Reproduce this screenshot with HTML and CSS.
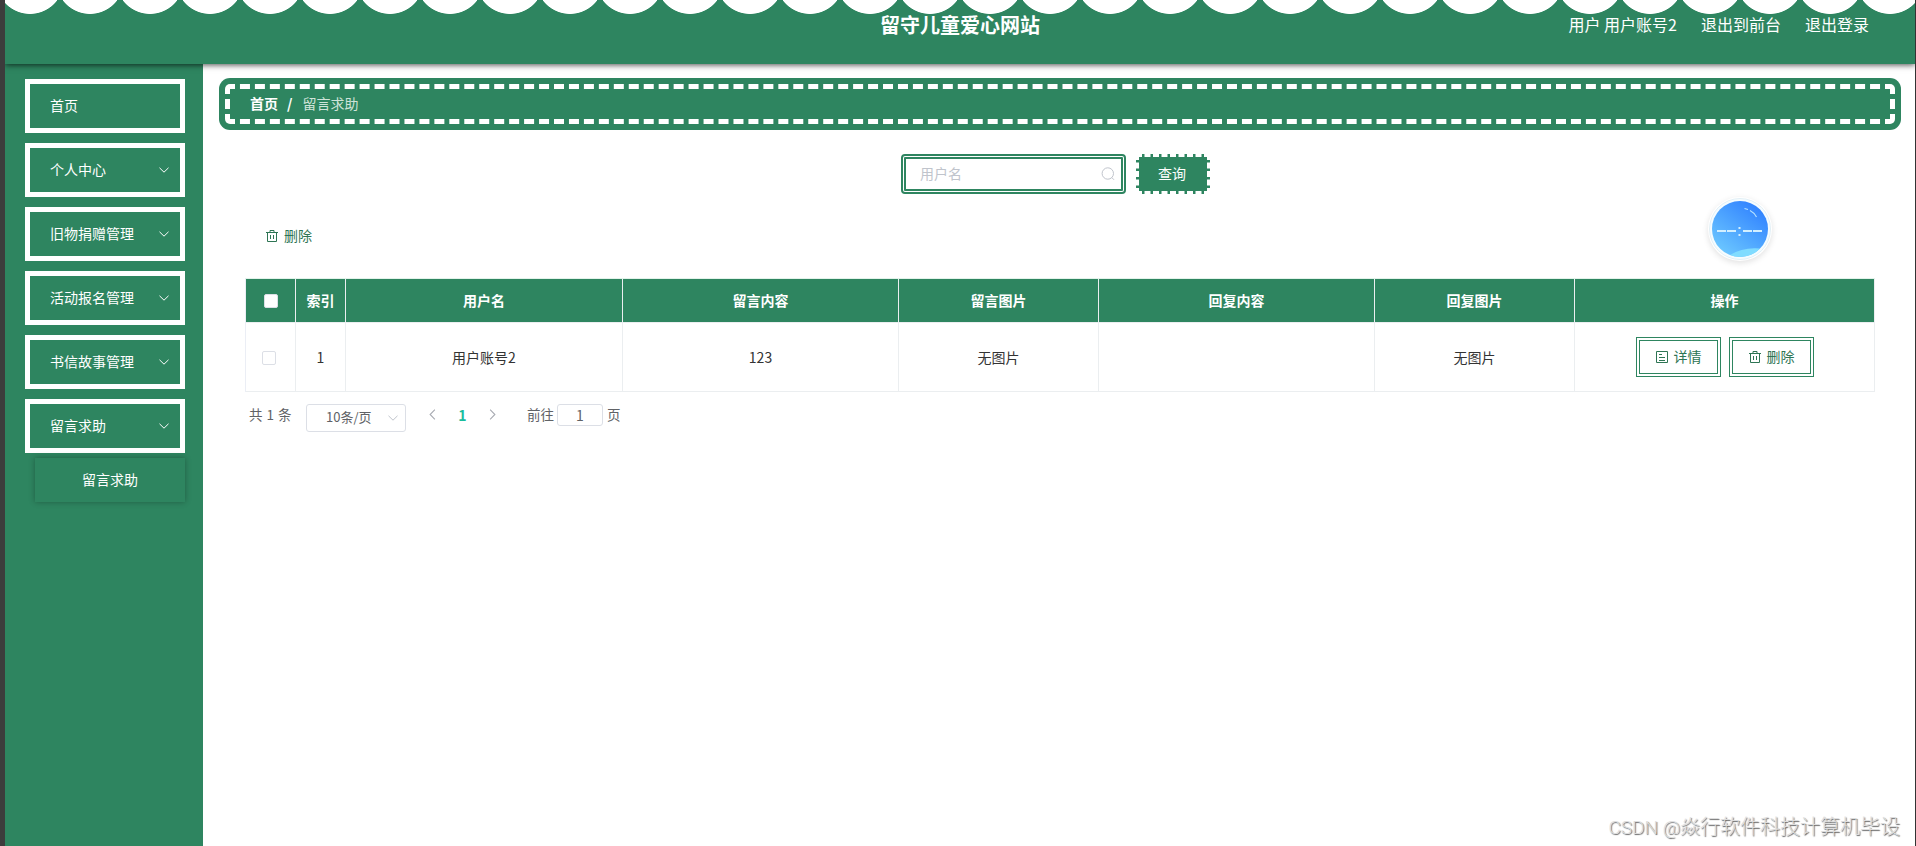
FILE: index.html
```html
<!DOCTYPE html>
<html lang="zh-CN">
<head>
    <meta charset="UTF-8">
    <meta name="viewport" content="width=device-width, initial-scale=1.0">
    <title>留守儿童爱心网站</title>
    <link rel="stylesheet" href="styles.css">
</head>
<body>
    <!-- Shared icons -->
    <svg class="icon-defs" width="0" height="0">
        <symbol id="icon-down" viewBox="0 0 12 12">
            <path d="M1.5 3.8 L6 8.2 L10.5 3.8" fill="none" stroke="currentColor"/>
        </symbol>
        <symbol id="icon-delete" viewBox="0 0 14 14">
            <path d="M1 3.5 H13 M5 3.5 V1.5 H9 V3.5 M2.5 3.5 V12.5 H11.5 V3.5 M5.5 6 V10 M8.5 6 V10" fill="none" stroke="currentColor"/>
        </symbol>
        <symbol id="icon-detail" viewBox="0 0 14 14">
            <path d="M1.5 1.5 H12.5 V12.5 H1.5 Z M4 4.5 H7 M4 7.5 H10 M4 10.5 H10" fill="none" stroke="currentColor"/>
        </symbol>
    </svg>

    <header class="header">
        <h1 class="title">留守儿童爱心网站</h1>
        <div class="user-links">
            <span>用户 用户账号2</span>
            <span>退出到前台</span>
            <span>退出登录</span>
        </div>
    </header>

    <div class="container">
        <!-- Left menu -->
        <nav class="sidebar">
            <div class="menu-item"><span>首页</span></div>
            <div class="menu-item"><span>个人中心</span><svg><use href="#icon-down"/></svg></div>
            <div class="menu-item"><span>旧物捐赠管理</span><svg><use href="#icon-down"/></svg></div>
            <div class="menu-item"><span>活动报名管理</span><svg><use href="#icon-down"/></svg></div>
            <div class="menu-item"><span>书信故事管理</span><svg><use href="#icon-down"/></svg></div>
            <div class="menu-item open"><span>留言求助</span><svg><use href="#icon-down"/></svg></div>
            <div class="submenu-item">留言求助</div>
        </nav>

        <main class="main">
            <div class="breadcrumb">
                <b>首页</b><b class="separator">/</b><span>留言求助</span>
            </div>

            <!-- Search form -->
            <div class="search">
                <div class="search-input">
                    <span>用户名</span>
                    <svg width="14" height="14" viewBox="0 0 14 14">
                        <circle cx="6.8" cy="6.5" r="5.7" fill="none" stroke="currentColor"/>
                        <path d="M10.8 10.5 L13 12.8" stroke="currentColor"/>
                    </svg>
                </div>
                <button class="search-button">查询</button>
            </div>

            <div class="toolbar">
                <svg class="icon"><use href="#icon-delete"/></svg><span>删除</span>
            </div>

            <table class="table">
                <colgroup>
                    <col class="col-check"><col class="col-index"><col class="col-user"><col class="col-text">
                    <col class="col-image"><col class="col-text"><col class="col-image"><col class="col-action">
                </colgroup>
                <thead>
                    <tr>
                        <th><i class="checkbox head"></i></th>
                        <th>索引</th>
                        <th>用户名</th>
                        <th>留言内容</th>
                        <th>留言图片</th>
                        <th>回复内容</th>
                        <th>回复图片</th>
                        <th>操作</th>
                    </tr>
                </thead>
                <tbody>
                    <tr>
                        <td><i class="checkbox"></i></td>
                        <td>1</td>
                        <td>用户账号2</td>
                        <td>123</td>
                        <td>无图片</td>
                        <td></td>
                        <td>无图片</td>
                        <td>
                            <div class="actions">
                                <button class="action-button"><svg class="icon"><use href="#icon-detail"/></svg><span>详情</span></button>
                                <button class="action-button"><svg class="icon"><use href="#icon-delete"/></svg><span>删除</span></button>
                            </div>
                        </td>
                    </tr>
                </tbody>
            </table>

            <div class="pagination">
                <span class="total">共 1 条</span>
                <div class="page-size"><span>10条/页</span><svg><use href="#icon-down"/></svg></div>
                <svg class="arrow prev"><use href="#icon-down"/></svg>
                <b class="current">1</b>
                <svg class="arrow next"><use href="#icon-down"/></svg>
                <span class="jump-label">前往</span>
                <span class="jump-input">1</span>
                <span class="jump-unit">页</span>
            </div>
        </main>
    </div>

    <!-- Floating timer ball -->
    <div class="timer">
        <svg width="64" height="64" viewBox="0 0 64 64">
            <defs>
                <linearGradient id="ball" x1="0.2" y1="0.9" x2="0.8" y2="0.1">
                    <stop offset="0" stop-color="#6ac5ff"/>
                    <stop offset="1" stop-color="#3284ff"/>
                </linearGradient>
            </defs>
            <circle cx="32" cy="32" r="30.5" fill="#f5fcff" stroke="#dcecf4" stroke-width="0.8"/>
            <circle cx="32" cy="32" r="28" fill="url(#ball)"/>
            <path d="M22 58 Q35 50 52 51.5 Q44 60 32 60 Q26 60 22 58 Z" fill="#80dcff"/>
            <path d="M9 34 H18 M19 34 H28 M35 34 H44 M45 34 H54" stroke="#d2efff" stroke-width="2"/>
            <path d="M30.5 31 H32.5 M30.5 38 H32.5" stroke="#d2efff" stroke-width="2"/>
            <path d="M36.5 11.5 L40 12.5 M42 13.5 Q46 15.5 48.5 20" fill="none" stroke="#b5e1ff" stroke-width="1.2"/>
        </svg>
    </div>

    <div class="watermark"><span>CSDN @</span>焱行软件科技计算机毕设</div>
</body>
</html>
```

FILE: styles.css
```css
* {
    box-sizing: border-box;
}

body {
    margin: 0;
    height: 846px;
    overflow: hidden;
    border-left: 5px solid #3c3c3c;
    border-right: 1px solid #333;
    background: #fff;
    color: #333;
    font-family: "Noto Sans CJK SC", sans-serif;
    font-size: 14px;
    line-height: 20px;
}

button {
    font: inherit;
    padding: 0;
}

svg {
    display: block;
}

.icon-defs {
    position: absolute;
}

.icon {
    width: 14px;
    height: 14px;
}

/* Header with scalloped top edge */
.header {
    position: relative;
    height: 64px;
    padding: 10px 46px 0 0;
    background: radial-gradient(circle at 30px -20px, #fff 33.5px, transparent 34.3px) -5px 0 / 60px 64px #2e8560;
    box-shadow: 0 1px 6px rgba(0, 0, 0, 0.7);
    color: #fff;
    display: grid;
    grid-template-columns: 1fr auto 1fr;
}

.title {
    grid-column: 2;
    margin: 0 0 0 46px;
    font-size: 20px;
    line-height: 30px;
}

.user-links {
    display: flex;
    justify-content: flex-end;
    gap: 24px;
    font-size: 16px;
    line-height: 28px;
    white-space: nowrap;
}

.container {
    display: flex;
    height: 782px;
}

/* Left menu */
.sidebar {
    width: 198px;
    padding: 15px 18px 0 20px;
    background: #2e8560;
    color: #fff;
}

.menu-item {
    height: 54px;
    margin-bottom: 10px;
    padding: 0 15px 0 20px;
    border: 5px solid #fff;
    display: flex;
    align-items: center;
    justify-content: space-between;
}

.menu-item span {
    padding-bottom: 2px;
}

.menu-item svg {
    width: 12px;
    height: 12px;
    margin-right: -5px;
}

.menu-item.open {
    margin-bottom: 5px;
}

.submenu-item {
    height: 44px;
    margin-left: 10px;
    line-height: 42px;
    text-align: center;
    box-shadow: 0 0 6px rgba(0, 0, 0, 0.3);
}

.main {
    flex: 1;
    padding: 20px 20px 0 22px;
}

/* Breadcrumb */
.breadcrumb {
    height: 40px;
    padding: 0 0 2px 20px;
    border: 5px dashed #fff;
    border-radius: 5px;
    background: #2e8560;
    box-shadow: 0 0 0 6px #2e8560;
    color: #fff;
    display: flex;
    align-items: center;
}

.breadcrumb span {
    color: #cfe3d9;
}

.separator {
    margin: 0 10px 0 9px;
}

/* Search form */
.search {
    margin-top: 30px;
    padding-right: 9px;
    display: flex;
    justify-content: center;
    gap: 10px;
}

.search-input {
    width: 225px;
    height: 40px;
    padding: 0 6px 0 14px;
    border: 5px double #2e8560;
    border-radius: 4px;
    color: #c0c4cc;
    display: flex;
    align-items: center;
    justify-content: space-between;
}

.search-input span {
    padding-bottom: 2px;
}

.search-button {
    width: 74px;
    height: 40px;
    padding: 0 2px 2px 0;
    border: 3px dashed #fff;
    border-radius: 2px;
    background: #2e8560;
    color: #fff;
}

.toolbar {
    margin: 31px 0 0 40px;
    color: #2e7554;
    display: flex;
    align-items: center;
    gap: 5px;
}

.toolbar .icon, .action-button .icon {
    margin-top: 1px;
}

/* Table */
.table {
    width: 1630px;
    margin: 33px 0 0 20px;
    border-collapse: separate;
    border-spacing: 0;
    border-top: 1px solid #e2f3ea;
    border-left: 1px solid #ebeef5;
    table-layout: fixed;
    text-align: center;
}

.col-check, .col-index {
    width: 50px;
}

.col-user {
    width: 277px;
}

.col-text {
    width: 276px;
}

.col-image {
    width: 200px;
}

.col-action {
    width: 300px;
}

.table th, .table td {
    padding: 0;
    border-right: 1px solid #ebeef0;
    border-bottom: 1px solid #ebeef0;
}

.table th {
    height: 44px;
    padding-bottom: 2px;
    background: #2e8560;
    color: #fff;
}

.table td {
    height: 69px;
}

.checkbox {
    display: block;
    width: 14px;
    height: 14px;
    margin: 1px auto 0 16px;
    border: 1px solid #dcdfe6;
    border-radius: 2px;
    background: #fff;
}

.checkbox.head {
    margin: 2px auto 0 18px;
}

.actions {
    display: flex;
    justify-content: center;
    gap: 8px;
    padding-left: 1px;
}

.action-button {
    width: 85px;
    height: 40px;
    padding: 0 1px 2px 0;
    border: 4px double #2e8560;
    background: #fff;
    color: #2e7554;
    display: flex;
    align-items: center;
    justify-content: center;
    gap: 5px;
}

/* Pagination */
.pagination {
    margin: 12px 0 0 24px;
    color: #606266;
    display: flex;
    align-items: flex-start;
    line-height: 20px;
}

.total {
    width: 57px;
    font-size: 13.5px;
    word-spacing: 1px;
}

.page-size {
    width: 100px;
    height: 28px;
    padding: 0 6px 0 19px;
    border: 1px solid #dcdfe6;
    border-radius: 3px;
    font-size: 13px;
    display: flex;
    align-items: center;
    justify-content: space-between;
}

.page-size span {
    padding-bottom: 2px;
}

.page-size svg {
    width: 12px;
    height: 12px;
    color: #c0c4cc;
}

.arrow {
    width: 13px;
    height: 13px;
    margin-top: 4px;
    color: #a8abb2;
}

.prev {
    margin-left: 20px;
    transform: rotate(90deg);
}

.next {
    transform: rotate(-90deg);
}

.current {
    width: 47px;
    line-height: 22px;
    text-align: center;
    color: #1abc9c;
}

.jump-label {
    margin-left: 28px;
    font-size: 13.5px;
}

.jump-input {
    width: 46px;
    height: 22px;
    margin: 0 4px 0 3px;
    border: 1px solid #dcdfe6;
    border-radius: 3px;
    line-height: 20px;
    text-align: center;
}

.jump-unit {
    font-size: 13.5px;
}

/* Floating over the page */
.timer {
    position: absolute;
    left: 1708px;
    top: 197px;
    border-radius: 50%;
    box-shadow: 0 2px 6px rgba(0, 0, 0, 0.12);
}

.watermark {
    position: absolute;
    right: 16px;
    bottom: 3px;
    color: #ddd;
    font-size: 20px;
    font-weight: 300;
    line-height: 30px;
    text-shadow: 1px 1px 1px #666;
}

.watermark span {
    font-family: Roboto, sans-serif;
    font-size: 19px;
    font-weight: 300;
}
```
